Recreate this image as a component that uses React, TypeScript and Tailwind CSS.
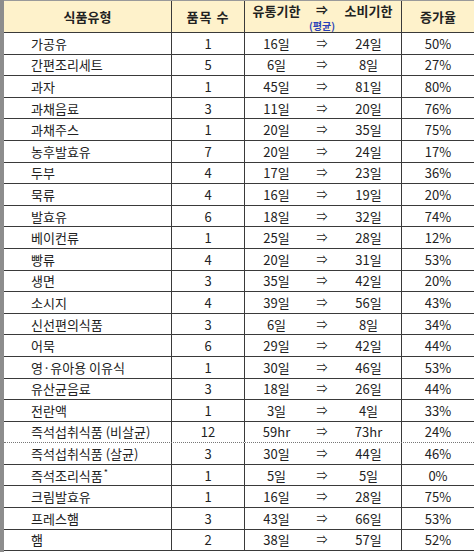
const rows: [string, number, string, string, string][] = [
  ['가공유', 1, '16일', '24일', '50%'],
  ['간편조리세트', 5, '6일', '8일', '27%'],
  ['과자', 1, '45일', '81일', '80%'],
  ['과채음료', 3, '11일', '20일', '76%'],
  ['과채주스', 1, '20일', '35일', '75%'],
  ['농후발효유', 7, '20일', '24일', '17%'],
  ['두부', 4, '17일', '23일', '36%'],
  ['묵류', 4, '16일', '19일', '20%'],
  ['발효유', 6, '18일', '32일', '74%'],
  ['베이컨류', 1, '25일', '28일', '12%'],
  ['빵류', 4, '20일', '31일', '53%'],
  ['생면', 3, '35일', '42일', '20%'],
  ['소시지', 4, '39일', '56일', '43%'],
  ['신선편의식품', 3, '6일', '8일', '34%'],
  ['어묵', 6, '29일', '42일', '44%'],
  ['영·유아용 이유식', 1, '30일', '46일', '53%'],
  ['유산균음료', 3, '18일', '26일', '44%'],
  ['전란액', 1, '3일', '4일', '33%'],
  ['즉석섭취식품 (비살균)', 12, '59hr', '73hr', '24%'],
  ['즉석섭취식품 (살균)', 3, '30일', '44일', '46%'],
  ['즉석조리식품', 1, '5일', '5일', '0%'],
  ['크림발효유', 1, '16일', '28일', '75%'],
  ['프레스햄', 3, '43일', '66일', '53%'],
  ['햄', 2, '38일', '57일', '52%'],
];

const cols = 'grid grid-cols-[167px_73px_157px_1fr]';

export default function App() {
  return (
    <div
      className="w-[474px] h-[552px] overflow-hidden bg-white text-[#222] border-l-4 border-[#8d8d8d]"
      style={{ fontFamily: '"Noto Sans CJK KR", "Noto Sans", sans-serif' }}
    >
      <div className="border-t border-[#9a9a9a]">
        {/* header */}
        <div className={`${cols} h-[32px] bg-[#fef2cb] border-b border-[#3a3a3a] font-bold text-[13px] leading-none`}>
          <div className="flex items-center justify-center">식품유형</div>
          <div className="flex items-center justify-center border-l border-[#3a3a3a] tracking-[1px]">품목 수</div>
          <div className="border-l border-[#3a3a3a] flex flex-col pt-[3px]">
            <div className="flex">
              <span className="w-[63px] text-center">유통기한</span>
              <span className="w-[28px] text-center text-[12px]">⇒</span>
              <span className="w-[65px] text-center">소비기한</span>
            </div>
            <div className="flex mt-[4px]">
              <span className="w-[63px]" />
              <span className="w-[28px] flex justify-center text-[10px] text-[#2741b8] whitespace-nowrap">(평균)</span>
              <span className="w-[65px]" />
            </div>
          </div>
          <div className="flex items-center justify-center border-l border-[#3a3a3a]">증가율</div>
        </div>
        {rows.map(([name, n, a, b, pct], i) => (
          <div
            key={name}
            className={`${cols} h-[21.6px] border-b text-[13px] leading-none ${
              i === 18 ? 'border-dotted border-[#777]' : 'border-[#3a3a3a]'
            }`}
          >
            <div className="flex items-center pl-[27px] whitespace-nowrap">
              {name}
              {name === '즉석조리식품' && <span className="relative -top-[3px] text-[9px] ml-[1px]">*</span>}
            </div>
            <div className="flex items-center justify-center border-l border-[#3a3a3a]">{n}</div>
            <div className="flex items-center border-l border-[#3a3a3a]">
              <span className="w-[63px] text-center">{a}</span>
              <span className="w-[28px] text-center text-[11px]">⇒</span>
              <span className="w-[65px] text-center">{b}</span>
            </div>
            <div className="flex items-center justify-center border-l border-[#3a3a3a]">{pct}</div>
          </div>
        ))}
      </div>
    </div>
  );
}
